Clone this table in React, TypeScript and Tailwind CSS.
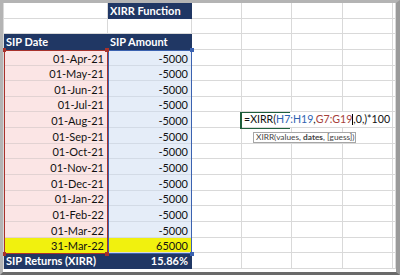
const dates = [
  "01-Apr-21",
  "01-May-21",
  "01-Jun-21",
  "01-Jul-21",
  "01-Aug-21",
  "01-Sep-21",
  "01-Oct-21",
  "01-Nov-21",
  "01-Dec-21",
  "01-Jan-22",
  "01-Feb-22",
  "01-Mar-22",
];

const grid = "border-r border-b border-[#d9d9d9]";
const navy = "bg-[#203764] border-r border-b border-[#203764] text-white font-bold";
const txt = "flex items-end text-[11px] leading-[13px] whitespace-nowrap";

function ColA() {
  return <div className={`w-[1px] shrink-0 ${grid}`} />;
}

function Rest({ formula = false }: { formula?: boolean }) {
  if (formula) {
    return (
      <>
        <div className={`w-[50px] shrink-0 ${grid}`} />
        <div className={`w-[151px] shrink-0 bg-white ${grid} flex items-end whitespace-nowrap pb-[1px] pl-[2px] text-[10.6px] leading-[13px] text-[#111]`}>
          <span>=XIRR(</span>
          <span className="text-[#2f63b1]">H7:H19</span>
          <span>,</span>
          <span className="text-[#a6413b]">G7:G19</span>
          <span className="mb-[1px] inline-block h-[11px] w-px bg-black" />
          <span>,0,)*100</span>
        </div>
        <div className={`flex-1 ${grid}`} />
      </>
    );
  }
  return (
    <>
      <div className={`w-[50px] shrink-0 ${grid}`} />
      <div className={`w-[50px] shrink-0 ${grid}`} />
      <div className={`w-[51px] shrink-0 ${grid}`} />
      <div className={`w-[50px] shrink-0 ${grid}`} />
      <div className={`flex-1 ${grid}`} />
    </>
  );
}

function Row({ children }: { children: React.ReactNode }) {
  return <div className="flex h-[15.65px]">{children}</div>;
}

export default function App() {
  return (
    <div
      className="h-[275px] w-[400px] overflow-hidden border-t-[3px] border-l-[3px] border-r-[4px] border-b-[3px] border-t-[#b4b4b4] border-l-[#b4b4b4] border-r-[#9a9a9a] border-b-[#6a6a6a] bg-white"
      style={{ fontFamily: "Lato, 'Open Sans', sans-serif" }}
    >
      <div className="relative h-full w-full">
        {/* row 1 */}
        <Row>
          <ColA />
          <div className={`w-[104px] shrink-0 ${grid}`} />
          <div className={`w-[84px] shrink-0 ${navy} ${txt} pb-[1px] pl-[2px]`}>XIRR Function</div>
          <Rest />
        </Row>
        {/* row 2 */}
        <Row>
          <ColA />
          <div className={`w-[104px] shrink-0 ${grid}`} />
          <div className={`w-[84px] shrink-0 ${grid}`} />
          <Rest />
        </Row>
        {/* headers */}
        <Row>
          <ColA />
          <div className={`w-[104px] shrink-0 ${navy} ${txt} pb-[1px] pl-[2px]`}>SIP Date</div>
          <div className={`w-[84px] shrink-0 ${navy} ${txt} pb-[1px] pl-[2px]`}>SIP Amount</div>
          <Rest />
        </Row>
        {dates.map((d, i) => (
          <Row key={d}>
            <ColA />
            <div className={`w-[104px] shrink-0 bg-[#fbe5e5] border-r border-b border-[#e2d2d2] ${txt} justify-end pr-[3px] text-[#111]`}>
              {d}
            </div>
            <div className={`w-[84px] shrink-0 bg-[#e5edf8] border-r border-b border-[#d3dbe6] ${txt} justify-end pr-[3px] text-[#111]`}>
              -5000
            </div>
            <Rest formula={i === 4} />
          </Row>
        ))}
        {/* final cash flow */}
        <Row>
          <ColA />
          <div className={`w-[104px] shrink-0 bg-[#f1f10e] border-r border-b border-[#f1f10e] ${txt} justify-end pr-[3px] text-[#111]`}>
            31-Mar-22
          </div>
          <div className={`w-[84px] shrink-0 bg-[#f1f10e] border-r border-b border-[#d9d9d9] ${txt} justify-end pr-[3px] text-[#111]`}>
            65000
          </div>
          <Rest />
        </Row>
        {/* result */}
        <Row>
          <ColA />
          <div className={`w-[104px] shrink-0 ${navy} ${txt} pb-[1px] pl-[2px]`}>SIP Returns (XIRR)</div>
          <div className={`w-[84px] shrink-0 ${navy} ${txt} justify-end pb-[1px] pr-[3px]`}>15.86%</div>
          <Rest />
        </Row>

        {/* range highlights */}
        <div className="absolute left-[1px] top-[47px] h-[204px] w-[104px] border border-[#a8322c]" />
        <div className="absolute left-[105px] top-[47px] h-[204px] w-[84px] border border-[#3b62b0]" />
        <div className="absolute left-[-1px] top-[45px] h-[4px] w-[4px] bg-[#a8322c]" />
        <div className="absolute left-[102px] top-[45px] h-[4px] w-[4px] bg-[#a8322c]" />
        <div className="absolute left-[-1px] top-[249px] h-[4px] w-[4px] bg-[#a8322c]" />
        <div className="absolute left-[102px] top-[249px] h-[4px] w-[4px] bg-[#a8322c]" />
        <div className="absolute left-[187px] top-[45px] h-[4px] w-[4px] bg-[#3b62b0]" />
        <div className="absolute left-[187px] top-[249px] h-[4px] w-[4px] bg-[#3b62b0]" />

        {/* active cell */}
        <div className="absolute left-[237px] top-[109px] h-[17px] w-[50px] border-l-2 border-t border-b border-[#1d5e3b]" />

        {/* function tooltip */}
        <div className="absolute left-[250px] top-[129px] flex h-[11px] w-[103px] items-center border border-[#a6a6a6] bg-white px-[2px] text-[8.3px] leading-[9px] whitespace-nowrap text-[#444]">
          <span className="whitespace-pre">XIRR(values, </span>
          <span className="font-bold whitespace-pre">dates</span>
          <span className="whitespace-pre">, [guess])</span>
        </div>
      </div>
    </div>
  );
}
